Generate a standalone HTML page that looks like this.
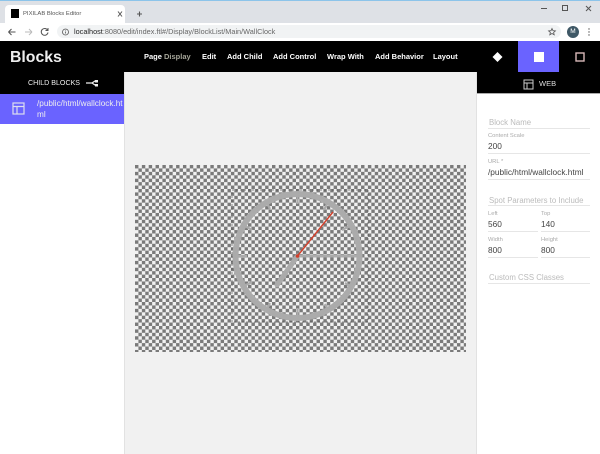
<!DOCTYPE html>
<html><head><meta charset="utf-8"><title>PIXILAB Blocks Editor</title>
<style>
html,body{margin:0;padding:0;width:600px;height:454px;overflow:hidden;background:#fff;font-family:"Liberation Sans",sans-serif}
.a{position:absolute;white-space:nowrap}
#w{position:absolute;left:0;top:0;width:600px;height:454px;filter:blur(.3px)}
.n{top:51px;font-size:7.500px;font-weight:bold;color:#fff;line-height:12px}
.l{font-size:5.800px;color:#aaa;line-height:8px}
.v{font-size:8.300px;color:#444;line-height:11px}
.p{font-size:7.800px;color:#bbb;line-height:11px}
.h{height:1px;background:#e6e6e6}
</style></head><body><div id="w">
<div class="a" style="left:0;top:0;width:600px;height:1px;background:#8cc4ea"></div>
<div class="a" style="left:0;top:1px;width:600px;height:22px;background:#dee1e6"></div>
<div class="a" style="left:5px;top:5px;width:120px;height:19px;background:#fff;border-radius:4px 4px 0 0"></div>
<div class="a" style="left:0;top:23px;width:600px;height:19px;background:#fff"></div>
<div class="a" style="left:11px;top:9px;width:8px;height:9px;background:#000"></div>
<div class="a" style="left:23px;top:9px;font-size:5.900px;line-height:10px;color:#555">PIXILAB Blocks Editor</div>
<div class="a" style="left:57px;top:25px;width:504px;height:13px;border-radius:7px;background:#f1f3f4"></div>
<svg class="a" style="left:0;top:0" width="600" height="41" fill="none" stroke="#555" stroke-width="1">
<path d="M118 11.500l4 5M122 11.500l-4 5"/><path d="M137 14h5M139.500 11.500v5" stroke-width="1.100"/>
<path d="M541 8.500h6"/><rect x="562.500" y="5.500" width="5" height="5"/><path d="M586 6l5 5M591 6l-5 5"/>
<path d="M8.500 32h7M8.500 32l3-3M8.500 32l3 3" stroke-width="1.100"/><path d="M25 32h7M32 32l-3-3M32 32l-3 3" stroke="#bbb"/>
<path d="M47.500 30a3.400 3.400 0 1 0 .5 2.500M48 28v2.500h-2.500"/>
<g stroke-width=".8"><circle cx="65.500" cy="32" r="3"/><path d="M65.500 31.500v2M65.500 30.200v.6"/>
<path d="M552 28.500l1 2.200 2.400.2-1.800 1.600.6 2.300-2.200-1.300-2.200 1.300.6-2.300-1.800-1.600 2.400-.2z"/></g>
<g fill="#555" stroke="none"><circle cx="589" cy="29" r=".7"/><circle cx="589" cy="32" r=".7"/><circle cx="589" cy="35" r=".7"/></g>
</svg>
<div class="a" style="left:74px;top:27px;font-size:7.300px;line-height:10px;color:#666"><span style="color:#222">localhost</span>:8080/edit/index.ftl#/Display/BlockList/Main/WallClock</div>
<div class="a" style="left:567px;top:26px;width:12px;height:12px;border-radius:50%;background:#3f5866;color:#fff;font-size:6.500px;line-height:12px;text-align:center">M</div>

<div class="a" style="left:0;top:41px;width:600px;height:31px;background:#000"></div>
<div class="a" style="left:0;top:72px;width:124px;height:22px;background:#000"></div>
<div class="a" style="left:477px;top:72px;width:123px;height:21px;background:#000"></div>
<div class="a" style="left:477px;top:93px;width:123px;height:1px;background:#aaa"></div>
<div class="a" style="left:10px;top:48px;font-size:15.800px;font-weight:bold;color:#eee;line-height:19px">Blocks</div>
<div class="a n" style="left:144px">Page <span style="color:#a5a598">Display</span></div>
<div class="a n" style="left:202px">Edit</div>
<div class="a n" style="left:227px">Add Child</div>
<div class="a n" style="left:273px">Add Control</div>
<div class="a n" style="left:327px">Wrap With</div>
<div class="a n" style="left:375px">Add Behavior</div>
<div class="a n" style="left:433px">Layout</div>
<div class="a" style="left:518px;top:41px;width:41px;height:31px;background:#6a63ff"></div>
<svg class="a" style="left:0;top:0" width="600" height="100">
<path d="M497.500 52l5 5-5 5-5-5z" fill="#fff"/>
<rect x="534" y="52" width="10" height="10" fill="#fff"/>
<rect x="576" y="53" width="8" height="8" fill="none" stroke="#d8b8b8" stroke-width="1.400"/>
<g fill="none" stroke="#ccc" stroke-width="1"><rect x="524" y="80" width="9" height="9"/><path d="M524 83h9M527 83v6"/></g>
<path d="M86 83h6M92 83l3-2h3M92 83l3 2h3" stroke="#eee" stroke-width="1.300" fill="none"/>
<rect x="95" y="80" width="3" height="2.500" fill="#eee"/><rect x="95" y="84" width="3" height="2.500" fill="#eee"/>
</svg>
<div class="a" style="left:28px;top:77px;font-size:7.100px;color:#eee;line-height:12px">CHILD BLOCKS</div>
<div class="a" style="left:539px;top:78px;font-size:7.500px;color:#ddd;line-height:12px">WEB</div>

<div class="a" style="left:0;top:94px;width:124px;height:30px;background:#6a63ff"></div>
<svg class="a" style="left:0;top:93px" width="40" height="31" fill="none" stroke="#dde" stroke-width="1.200"><rect x="13" y="10" width="11" height="11"/><path d="M13 13.500h11M17 13.500v7.500"/></svg>
<div class="a" style="left:37px;top:98px;width:87px;font-size:8.200px;line-height:11px;color:#eee;white-space:normal;word-break:break-all">/public/html/wallclock.html</div>

<div class="a" style="left:124px;top:72px;width:353px;height:382px;background:#f1f1f1;border-left:1px solid #e2e2e2;border-right:1px solid #e2e2e2;box-sizing:border-box"></div>
<svg class="a" style="left:0;top:0" width="600" height="454">
<defs><pattern id="c" x="135" y="165" width="6.850" height="6.850" patternUnits="userSpaceOnUse"><rect width="6.850" height="6.850" fill="#f1f1f1"/><rect width="3.425" height="3.425" fill="#7a7a7a"/><rect x="3.425" y="3.425" width="3.425" height="3.425" fill="#7a7a7a"/></pattern></defs>
<rect x="135" y="165" width="331" height="187" fill="url(#c)"/>
<rect x="232" y="190" width="136" height="132" fill="none" stroke="#444" stroke-width="1" stroke-dasharray="2 2" opacity=".6"/>
<circle cx="297.500" cy="256" r="62" fill="none" stroke="#ababab" stroke-width="6"/>
<g stroke="#ababab" stroke-width="2.200">
<path d="M297.500 195v9M297.500 308v9M237 256h10M348 256h10M267 203l3 6M325 304l3 6M245 226l7 4M345 283l7 4M327 204l-3 6M270 303l-3 6M350 226l-8 4M252 282l-8 4"/>
</g>
<path d="M297.500 256L277 285" stroke="#ababab" stroke-width="5" stroke-linecap="round"/>
<path d="M297.500 256H358" stroke="#ababab" stroke-width="3"/>
<path d="M297.500 256L333 212" stroke="#d33f2a" stroke-width="1.400"/>
<circle cx="297.500" cy="256" r="1.800" fill="#d33f2a"/>
</svg>

<div class="a p" style="left:489px;top:117px">Block Name</div><div class="a h" style="left:488px;top:128px;width:102px"></div>
<div class="a l" style="left:488px;top:132px">Content Scale</div>
<div class="a v" style="left:488px;top:141px">200</div><div class="a h" style="left:488px;top:153px;width:102px"></div>
<div class="a l" style="left:488px;top:158px">URL *</div>
<div class="a v" style="left:488px;top:167px">/public/html/wallclock.html</div><div class="a h" style="left:488px;top:179px;width:102px"></div>
<div class="a p" style="left:489px;top:195px">Spot Parameters to Include</div><div class="a h" style="left:488px;top:205px;width:102px"></div>
<div class="a l" style="left:488px;top:210px">Left</div><div class="a l" style="left:541px;top:210px">Top</div>
<div class="a v" style="left:488px;top:219px">560</div><div class="a v" style="left:541px;top:219px">140</div>
<div class="a h" style="left:488px;top:231px;width:50px"></div><div class="a h" style="left:541px;top:231px;width:49px"></div>
<div class="a l" style="left:488px;top:236px">Width</div><div class="a l" style="left:541px;top:236px">Height</div>
<div class="a v" style="left:488px;top:245px">800</div><div class="a v" style="left:541px;top:245px">800</div>
<div class="a h" style="left:488px;top:257px;width:50px"></div><div class="a h" style="left:541px;top:257px;width:49px"></div>
<div class="a p" style="left:489px;top:272px">Custom CSS Classes</div><div class="a h" style="left:488px;top:283px;width:102px"></div>
</div></body></html>
